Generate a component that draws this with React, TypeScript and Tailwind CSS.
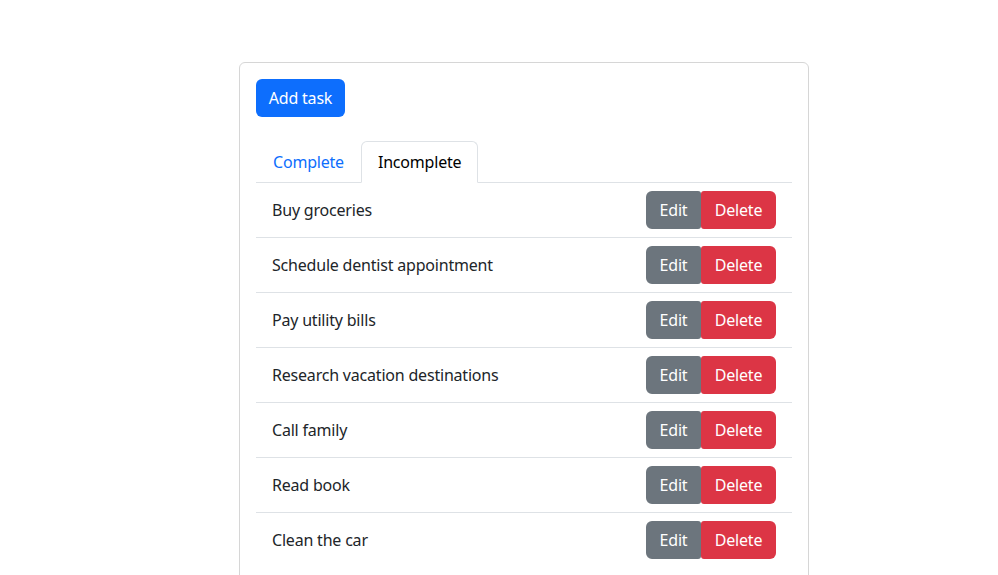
import React, { useState } from "react";

const tasks = [
  "Buy groceries",
  "Schedule dentist appointment",
  "Pay utility bills",
  "Research vacation destinations",
  "Call family",
  "Read book",
  "Clean the car",
];

const App = () => {
  const [tab, setTab] = useState("incomplete");

  return (
    <div
      className="min-h-screen bg-white pt-[62px] pl-[239px] text-[16px] leading-[24px] tracking-[-0.2px] text-[#212529]"
      style={{ fontFamily: '"Noto Sans", sans-serif' }}
    >
      <div className="w-[570px] rounded-[6px] border border-[#d6d6d6] p-[16px]">
        <button className="w-[89px] rounded-[6px] bg-[#0d6efd] py-[7px] text-white">
          Add task
        </button>
        <div className="mt-[24px] flex border-b border-[#dee2e6]">
          <button
            onClick={() => setTab("complete")}
            className={
              tab === "complete"
                ? "-mb-px rounded-t-[6px] border border-[#dee2e6] border-b-white bg-white px-[16px] py-[8px] text-[#495057]"
                : "-mb-px border border-transparent px-[16px] py-[8px] text-[#0d6efd]"
            }
          >
            Complete
          </button>
          <button
            onClick={() => setTab("incomplete")}
            className={
              tab === "incomplete"
                ? "-mb-px rounded-t-[6px] border border-[#dee2e6] border-b-white bg-white px-[16px] py-[8px] text-[#000000]"
                : "-mb-px border border-transparent px-[16px] py-[8px] text-[#0d6efd]"
            }
          >
            Incomplete
          </button>
        </div>
        <ul>
          {tasks.map((task, i) => (
            <li
              key={task}
              className={
                "flex items-center justify-between px-[16px] py-[8px]" +
                (i < tasks.length - 1 ? " border-b border-[#dee2e6]" : "")
              }
            >
              <span>{task}</span>
              <div className="flex">
                <button className="w-[55px] rounded-l-[6px] rounded-r-[3px] bg-[#6c757d] py-[7px] text-white">
                  Edit
                </button>
                <button className="w-[75px] rounded-r-[6px] rounded-l-[3px] bg-[#dc3545] py-[7px] text-white">
                  Delete
                </button>
              </div>
            </li>
          ))}
        </ul>
      </div>
    </div>
  );
};

export default App;
